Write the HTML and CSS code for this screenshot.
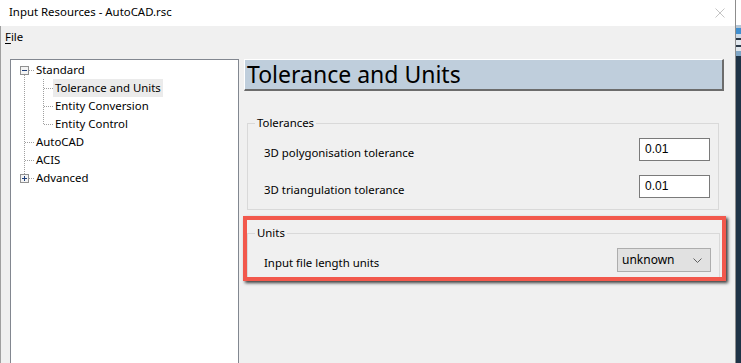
FILE: index.html
```html
<!DOCTYPE html>
<html lang="en">
<head>
<meta charset="utf-8">
<title>Input Resources - AutoCAD.rsc</title>
<link rel="stylesheet" href="styles.css">
</head>
<body>
<div class="screen">
  <div class="window">
    <div class="titlebar">
      <span class="title">Input Resources - AutoCAD.rsc</span>
      <svg class="close" width="10" height="10" viewBox="0 0 10 10"><path d="M0.5 0.5 L9.5 9.5 M9.5 0.5 L0.5 9.5" stroke="#c4c4c4" stroke-width="1" fill="none"/></svg>
    </div>
    <div class="menubar"><span class="menu"><span class="accel">F</span>ile</span></div>
    <div class="client">
      <div class="tree">
        <ul class="root">
          <li>
            <div class="row">
              <svg class="expander" width="9" height="9" viewBox="0 0 9 9"><rect x="0.5" y="0.5" width="8" height="8" fill="#f4f4f4" stroke="#919191"/><path d="M2 4.5 H7" stroke="#1f3f7a"/></svg>
              <span class="label">Standard</span>
            </div>
            <ul class="children">
              <li><div class="row"><span class="label selected">Tolerance and Units</span></div></li>
              <li><div class="row"><span class="label">Entity Conversion</span></div></li>
              <li><div class="row"><span class="label">Entity Control</span></div></li>
            </ul>
          </li>
          <li><div class="row"><span class="label">AutoCAD</span></div></li>
          <li><div class="row"><span class="label">ACIS</span></div></li>
          <li>
            <div class="row">
              <svg class="expander" width="9" height="9" viewBox="0 0 9 9"><rect x="0.5" y="0.5" width="8" height="8" fill="#f4f4f4" stroke="#919191"/><path d="M2 4.5 H7 M4.5 2 V7" stroke="#1f3f7a"/></svg>
              <span class="label">Advanced</span>
            </div>
          </li>
        </ul>
      </div>
      <div class="panel">
        <div class="header">Tolerance and Units</div>
        <fieldset class="group tolerances">
          <legend>Tolerances</legend>
          <div class="field">
            <span class="field-label">3D polygonisation tolerance</span>
            <span class="textbox">0.01</span>
          </div>
          <div class="field">
            <span class="field-label">3D triangulation tolerance</span>
            <span class="textbox">0.01</span>
          </div>
        </fieldset>
        <div class="highlight">
          <fieldset class="group units">
            <legend>Units</legend>
            <div class="field">
              <span class="field-label">Input file length units</span>
              <span class="combo">unknown<svg class="chevron" width="9" height="5" viewBox="0 0 9 5"><path d="M0.5 0.5 L4.5 4.5 L8.5 0.5" stroke="#606060" fill="none"/></svg></span>
            </div>
          </fieldset>
        </div>
      </div>
    </div>
  </div>
  <div class="desktop"></div>
</div>
</body>
</html>
```

FILE: styles.css
```css
* { box-sizing: border-box; }
html, body {
  margin: 0;
  padding: 0;
  width: 741px;
  height: 363px;
  overflow: hidden;
  font-family: "Noto Sans", "DejaVu Sans", sans-serif;
  font-size: 11.4px;
  color: #000;
}
.screen {
  display: flex;
  width: 741px;
  height: 363px;
}
.window {
  width: 736px;
  height: 363px;
  display: flex;
  flex-direction: column;
  border-right: 1px solid #8d8d8d;
  overflow: hidden;
  background: #f0f0f0;
}
.desktop {
  flex: 1;
  background: linear-gradient(to bottom,
    #ffffff 0, #ffffff 25px,
    #b7c7d6 25px, #b7c7d6 28px,
    #3f8fd0 28px, #3f8fd0 34px,
    #cddbe8 34px, #cddbe8 38px,
    #2a3847 38px, #2a3847 40px,
    #e2e8ee 40px, #e2e8ee 45px,
    #2a3847 45px, #2a3847 47px,
    #dfe6ec 47px, #dfe6ec 51px,
    #7fa6c6 51px, #7fa6c6 56px,
    #1e3346 56px, #1e3346 100%);
}
.titlebar {
  height: 26px;
  flex: none;
  background: #fff;
  display: flex;
  align-items: center;
  justify-content: space-between;
  padding: 0 10px 2px 9px;
}
.title { line-height: 16px; }
.close { display: block; margin-top: 2px; }
.menubar {
  height: 22px;
  flex: none;
  border-left: 1px solid #a0a0a0;
  padding: 3px 0 0 4px;
  line-height: 16px;
}
.accel { text-decoration: underline; text-underline-offset: 2px; }
.client {
  flex: 1;
  display: flex;
  align-items: stretch;
  border-left: 1px solid #a0a0a0;
  padding: 11px 0 0 9px;
  min-height: 0;
}
.tree {
  width: 229px;
  flex: none;
  margin-bottom: -3px;
  background: #fff;
  border: 1px solid #828790;
}
.root, .children {
  list-style: none;
  margin: 0;
  position: relative;
}
.root { padding: 1px 0 0 0; }
.children { padding: 0; }
.root::before {
  content: "";
  position: absolute;
  left: 13px;
  top: 15px;
  bottom: 13px;
  border-left: 1px dotted #a0a0a0;
}
.children::before {
  content: "";
  position: absolute;
  left: 32px;
  top: 0;
  bottom: 9px;
  border-left: 1px dotted #a0a0a0;
}
.row {
  position: relative;
  height: 18px;
  display: flex;
  align-items: center;
  padding-left: 23px;
}
.row::before {
  content: "";
  position: absolute;
  left: 14px;
  top: 9px;
  width: 9px;
  border-top: 1px dotted #a0a0a0;
}
.children .row { padding-left: 42px; }
.children .row::before { left: 33px; width: 9px; }
.expander {
  position: absolute;
  left: 9px;
  top: 5px;
  display: block;
  z-index: 1;
}
.label {
  padding: 0 2px;
  line-height: 18px;
  white-space: nowrap;
}
.label.selected { background: #ebebeb; }
.panel {
  flex: 1;
  display: flex;
  flex-direction: column;
  padding: 0 11px 0 5px;
  min-width: 0;
}
.header {
  height: 32px;
  flex: none;
  background: #bfcedc;
  border-top: 1px solid #fff;
  border-left: 1px solid #fff;
  border-right: 2px solid #6c6c6c;
  border-bottom: 2px solid #6c6c6c;
  font-size: 23px;
  line-height: 29px;
  padding-left: 2px;
  white-space: nowrap;
}
.group {
  margin: 0;
  padding: 0;
  border: 1px solid #d9d9d9;
  min-width: 0;
}
.group legend {
  margin-left: 7px;
  padding: 0 2px;
  line-height: 16px;
}
.tolerances {
  margin: 24px 5px 0 3px;
  padding: 7px 0 11px 0;
}
.field {
  display: flex;
  justify-content: space-between;
  align-items: flex-start;
  height: 23px;
  padding: 0 8px 0 16px;
}
.field + .field { margin-top: 14px; }
.field-label {
  line-height: 16px;
  padding-top: 7px;
  white-space: nowrap;
}
.textbox {
  width: 71px;
  height: 23px;
  background: #fff;
  border: 1px solid #7a7a7a;
  padding-left: 5px;
  line-height: 21px;
  font-family: "Liberation Sans", Arial, sans-serif;
  font-size: 12px;
}
.highlight {
  height: 65px;
  margin: 6px -2px 0 -1px;
  border: 4px solid #f2584c;
  box-shadow: 2px 2px 3px rgba(0, 0, 0, 0.75);
  overflow: hidden;
}
.units {
  margin: 5px 2px 0 0;
  padding: 7px 0 20px 0;
}
.combo {
  width: 94px;
  height: 24px;
  background: #e1e1e1;
  border: 1px solid #adadad;
  padding: 0 8px 0 4px;
  display: flex;
  align-items: center;
  justify-content: space-between;
  line-height: 20px;
  font-size: 12px;
}
.chevron { display: block; }
```
